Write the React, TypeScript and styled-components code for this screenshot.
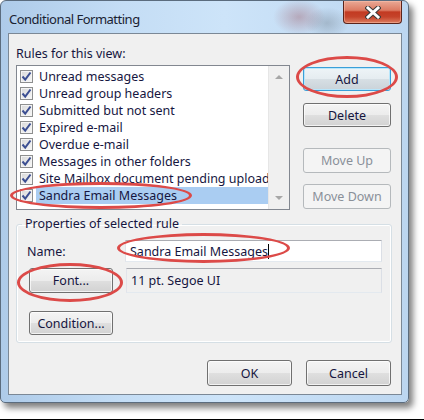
import styled, { createGlobalStyle, css } from "styled-components";

const colors = {
  text: "#16163f",
  disabledText: "#8a9099",
  client: "#f0f0f0",
  listBorder: "#828790",
  selected: "#aacdf2",
  ellipse: "#dc4a48",
};

const GlobalStyle = createGlobalStyle`
  html, body {
    margin: 0;
    padding: 0;
    background: #fff;
  }

  body {
    font-family: "Noto Sans", "Open Sans", sans-serif;
    font-size: 12.5px;
    color: ${colors.text};
  }
`;

const Page = styled.div`
  position: relative;
  width: 424px;
  height: 420px;
  box-sizing: border-box;
  border-bottom: 1px solid #000;
  overflow: hidden;
`;

const Window = styled.div`
  width: 409px;
  height: 403px;
  box-sizing: border-box;
  display: flex;
  flex-direction: column;
  padding: 0 6px 7px 7px;
  border: 1px solid #5b6c7e;
  border-radius: 6px 6px 5px 5px;
  background:
    radial-gradient(ellipse 26px 18px at 298px 16px, rgba(150, 70, 80, 0.35), transparent),
    radial-gradient(ellipse 22px 16px at 326px 22px, rgba(90, 100, 110, 0.3), transparent),
    linear-gradient(90deg, #aecbe9 0%, #c4ddf5 30%, #cde4f9 55%, #bcd6f0 100%);
  box-shadow: 4px 5px 6px rgba(0, 0, 0, 0.5);
`;

const TitleBar = styled.div`
  display: flex;
  align-items: flex-start;
  height: 32px;
  flex-shrink: 0;
`;

const Title = styled.div`
  margin-left: 1px;
  padding-top: 9px;
  font-size: 13px;
  letter-spacing: -0.5px;
  line-height: 18px;
  color: #1a2232;
`;

const CloseButton = styled.div`
  margin-left: auto;
  width: 59px;
  height: 23px;
  box-sizing: border-box;
  display: flex;
  align-items: center;
  justify-content: center;
  border: 1px solid #5a241b;
  border-top: none;
  border-radius: 0 0 4px 4px;
  background: linear-gradient(
    #e9a996 0%,
    #dc7b63 42%,
    #c23a22 50%,
    #c5432a 72%,
    #dc7d60 100%
  );
  box-shadow: inset 0 0 0 1px rgba(255, 200, 180, 0.45);
`;

const Client = styled.div`
  flex: 1;
  display: flex;
  flex-direction: column;
  border: 1px solid #7b8896;
  background: ${colors.client};
  padding: 12px 9px 0 7px;
`;

const RulesLabel = styled.div`
  line-height: 16px;
  margin-bottom: 3px;
`;

const TopRow = styled.div`
  display: flex;
  align-items: flex-start;
  gap: 13px;
`;

const ListBox = styled.div`
  width: 274px;
  height: 145px;
  box-sizing: border-box;
  display: flex;
  border: 1px solid ${colors.listBorder};
  background: #fff;
`;

const Rows = styled.div`
  flex: 1;
  min-width: 0;
  padding-top: 2px;
  overflow: hidden;
`;

const Row = styled.div`
  display: flex;
  align-items: center;
  height: 17px;
  padding-left: 3px;
`;

const Check = styled.div`
  width: 13px;
  height: 13px;
  flex-shrink: 0;
  box-sizing: border-box;
  border: 1px solid #8e8f8f;
  background: linear-gradient(135deg, #d8d8d8, #f8f8f8);
  box-shadow: inset 0 0 0 1px #f4f4f4;
  display: flex;
  align-items: center;
  justify-content: center;
`;

const RowText = styled.div<{ $selected?: boolean }>`
  flex: 1;
  margin-left: 3px;
  padding-left: 3px;
  line-height: 17px;
  white-space: nowrap;
  overflow: hidden;
  background: ${(p) => (p.$selected ? colors.selected : "transparent")};
`;

const ScrollBar = styled.div`
  width: 20px;
  flex-shrink: 0;
  display: flex;
  flex-direction: column;
  justify-content: space-between;
  background: #f0f0f0;
  border-left: 1px solid #e6e6e6;
`;

const Arrow = styled.div<{ $down?: boolean }>`
  height: 22px;
  display: flex;
  align-items: center;
  justify-content: center;

  &::before {
    content: "";
    border-left: 4px solid transparent;
    border-right: 4px solid transparent;
    ${(p) =>
      p.$down
        ? css`
            border-top: 4px solid #a7a7a7;
          `
        : css`
            border-bottom: 4px solid #a7a7a7;
          `}
  }
`;

const ButtonColumn = styled.div`
  width: 88px;
  display: flex;
  flex-direction: column;
  padding-top: 2px;
`;

const Button = styled.button<{ $default?: boolean; $w?: number; $h?: number; $gap?: number }>`
  width: ${(p) => p.$w ?? 88}px;
  height: ${(p) => p.$h ?? 24}px;
  margin-top: ${(p) => p.$gap ?? 0}px;
  flex-shrink: 0;
  padding: 0;
  font: inherit;
  color: ${colors.text};
  border: 1px solid #707070;
  border-radius: 3px;
  background: linear-gradient(#f4f4f4 0%, #ececec 50%, #dfdfdf 51%, #d2d2d2 100%);
  box-shadow: inset 0 0 0 1px rgba(255, 255, 255, 0.7);

  ${(p) =>
    p.$default &&
    css`
      border-color: #3a9fd8;
      background: linear-gradient(#eef4f7 0%, #e5ecf0 50%, #d7dfe4 51%, #cad3d9 100%);
      box-shadow: inset 0 0 0 1px #b8e6fb;
    `}

  &:disabled {
    color: ${colors.disabledText};
    border-color: #b5b9bc;
    background: #f4f4f4;
    box-shadow: none;
  }
`;

const GroupBox = styled.fieldset`
  margin: 6px 0 0;
  padding: 8px 9px 7px 12px;
  border: 1px solid #d5dfe5;
  border-radius: 3px;
  box-shadow: inset 0 0 0 1px #fff;
  min-width: 0;
`;

const Legend = styled.legend`
  margin-left: -7px;
  padding: 0 3px;
  line-height: 16px;
`;

const FieldRow = styled.div<{ $gap?: number; $h: number }>`
  display: flex;
  align-items: center;
  height: ${(p) => p.$h}px;
  margin-top: ${(p) => p.$gap ?? 0}px;
`;

const NameLabel = styled.div`
  width: 98px;
  margin-left: -2px;
  flex-shrink: 0;
`;

const TextBox = styled.div<{ $readOnly?: boolean; $h: number; $left?: number }>`
  flex: 1;
  height: ${(p) => p.$h}px;
  margin-left: ${(p) => p.$left ?? 0}px;
  box-sizing: border-box;
  display: flex;
  align-items: center;
  padding-left: 4px;
  border: 1px solid #abadb3;
  border-color: #abadb3 #dbdfe6 #e3e9ef #e2e3ea;
  background: ${(p) => (p.$readOnly ? colors.client : "#fff")};
  white-space: nowrap;
`;

const Caret = styled.span`
  display: inline-block;
  width: 1px;
  height: 15px;
  background: #000;
`;

const Footer = styled.div`
  display: flex;
  justify-content: flex-end;
  gap: 14px;
  margin-top: 17px;
  margin-right: 1px;
`;

const Ellipse = styled.div<{ $x: number; $y: number; $w: number; $h: number }>`
  position: absolute;
  left: ${(p) => p.$x}px;
  top: ${(p) => p.$y}px;
  width: ${(p) => p.$w}px;
  height: ${(p) => p.$h}px;
  box-sizing: border-box;
  border: 3px solid ${colors.ellipse};
  border-radius: 50%;
  pointer-events: none;
`;

const CloseGlyph = () => (
  <svg width="16" height="13" viewBox="0 0 16 13">
    <path d="M3 2 L13 11 M13 2 L3 11" stroke="#3a3a3a" strokeWidth="5" strokeLinecap="square" />
    <path d="M3 2 L13 11 M13 2 L3 11" stroke="#fff" strokeWidth="3" strokeLinecap="square" />
  </svg>
);

const CheckMark = () => (
  <svg width="11" height="11" viewBox="0 0 11 11">
    <path d="M1.5 5.5 L4.2 8.6 L9.5 1.5" fill="none" stroke="#3c4f92" strokeWidth="2" />
  </svg>
);

const rules = [
  "Unread messages",
  "Unread group headers",
  "Submitted but not sent",
  "Expired e-mail",
  "Overdue e-mail",
  "Messages in other folders",
  "Site Mailbox document pending upload",
  "Sandra Email Messages",
];

const App = () => (
  <>
    <GlobalStyle />
    <Page>
      <Window>
        <TitleBar>
          <Title>Conditional Formatting</Title>
          <CloseButton>
            <CloseGlyph />
          </CloseButton>
        </TitleBar>
        <Client>
          <RulesLabel>Rules for this view:</RulesLabel>
          <TopRow>
            <ListBox>
              <Rows>
                {rules.map((rule, idx) => (
                  <Row key={rule}>
                    <Check>
                      <CheckMark />
                    </Check>
                    <RowText $selected={idx === rules.length - 1}>{rule}</RowText>
                  </Row>
                ))}
              </Rows>
              <ScrollBar>
                <Arrow />
                <Arrow $down />
              </ScrollBar>
            </ListBox>
            <ButtonColumn>
              <Button $default>Add</Button>
              <Button $gap={12}>Delete</Button>
              <Button $gap={21} $h={25} disabled>
                Move Up
              </Button>
              <Button $gap={11} $h={25} disabled>
                Move Down
              </Button>
            </ButtonColumn>
          </TopRow>
          <GroupBox>
            <Legend>Properties of selected rule</Legend>
            <FieldRow $h={22}>
              <NameLabel>Name:</NameLabel>
              <TextBox $h={22}>
                Sandra Email Messages
                <Caret />
              </TextBox>
            </FieldRow>
            <FieldRow $h={26} $gap={5}>
              <Button $w={84} $h={25}>
                Font...
              </Button>
              <TextBox $h={25} $left={13} $readOnly>
                11 pt. Segoe UI
              </TextBox>
            </FieldRow>
            <FieldRow $h={24} $gap={18}>
              <Button $w={84}>Condition...</Button>
            </FieldRow>
          </GroupBox>
          <Footer>
            <Button $w={85} $h={26}>
              OK
            </Button>
            <Button $w={85} $h={26}>
              Cancel
            </Button>
          </Footer>
        </Client>
      </Window>
      <Ellipse $x={296} $y={56} $w={102} $h={42} />
      <Ellipse $x={10} $y={182} $w={182} $h={27} />
      <Ellipse $x={117} $y={233} $w={173} $h={30} />
      <Ellipse $x={17} $y={263} $w={106} $h={39} />
    </Page>
  </>
);

export default App;
